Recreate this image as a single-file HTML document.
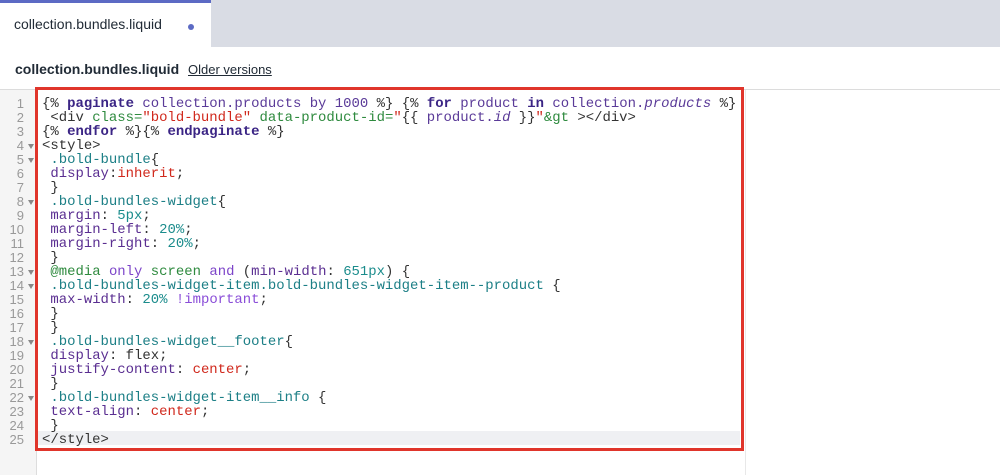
<!DOCTYPE html>
<html><head><meta charset="utf-8"><style>
body{margin:0;width:1000px;height:475px;overflow:hidden;background:#fff;font-family:"Liberation Sans",sans-serif;position:relative}
.tabbar{position:absolute;left:0;top:0;width:1000px;height:47px;background:#d9dce4}
.tab{position:absolute;left:0;top:0;width:211px;height:47px;background:#fff;border-top:3px solid #5c6ac4;box-sizing:border-box}
.tab span{position:absolute;left:14px;top:13px;font-size:14px;color:#212b36}
.dot{position:absolute;left:188px;top:21px;width:6px;height:6px;border-radius:50%;background:#5c6ac4}
.title{position:absolute;left:15px;top:61px;font-size:14px;font-weight:bold;color:#212b36}
.older{position:absolute;left:188px;top:62px;font-size:13px;color:#212b36;text-decoration:underline}
.hr{position:absolute;left:0;top:89px;width:1000px;height:1px;background:#dcdcdc}
.gutter{position:absolute;left:0;top:90px;width:36px;height:385px;background:#f5f5f5;border-right:1px solid #ddd}
.nums{position:absolute;left:0;top:97px;width:24px;text-align:right;font-family:"Liberation Sans",sans-serif;font-size:13px;line-height:14px;color:#999}
.arr{position:absolute;left:28px;width:0;height:0;border-left:3.5px solid transparent;border-right:3.5px solid transparent;border-top:5px solid #888}
.hl{position:absolute;left:38px;top:431px;width:702px;height:14px;background:#eff0f3}
.box{position:absolute;left:35px;top:87px;width:709px;height:364px;border:3px solid #e0352b;box-sizing:border-box}
.code{position:absolute;left:42px;top:97px;font-family:"Liberation Mono",monospace;font-size:13.95px;line-height:14px;color:#333;white-space:pre}
.k{color:#3b2585;font-weight:bold}.v{color:#5a3a98}.a{color:#2e8a3e}.s{color:#d0281c}.c{color:#1c7f86}.p{color:#5a2e91}.n{color:#1b8c8c}.i{color:#8a4dd8}.o{color:#7c44c9}.g{color:#2e8a3e}
.rl{position:absolute;left:745px;top:90px;width:1px;height:385px;background:#e8e8e8}
</style></head><body>
<div class="tabbar"><div class="tab"><span>collection.bundles.liquid</span><div class="dot"></div></div></div>
<div class="title">collection.bundles.liquid</div><div class="older">Older versions</div>
<div class="hr"></div>
<div class="gutter"></div>
<div class="nums">1<br>2<br>3<br>4<br>5<br>6<br>7<br>8<br>9<br>10<br>11<br>12<br>13<br>14<br>15<br>16<br>17<br>18<br>19<br>20<br>21<br>22<br>23<br>24<br>25</div>
<div class="arr" style="top:144px"></div><div class="arr" style="top:158px"></div><div class="arr" style="top:200px"></div><div class="arr" style="top:270px"></div><div class="arr" style="top:284px"></div><div class="arr" style="top:340px"></div><div class="arr" style="top:396px"></div>
<div class="hl"></div>
<div class="rl"></div>
<div class="code">{% <span class="k">paginate</span> <span class="v">collection.products</span> <span class="v">by</span> <span class="v">1000</span> %} {% <span class="k">for</span> <span class="v">product</span> <span class="k">in</span> <span class="v">collection.<i>products</i></span> %}
 &lt;div <span class="a">class=</span><span class="s">"bold-bundle"</span> <span class="a">data-product-id=</span><span class="s">"</span>{{ <span class="v">product.<i>id</i></span> }}<span class="s">"</span><span class="a">&amp;gt</span> &gt;&lt;/div&gt;
{% <span class="k">endfor</span> %}{% <span class="k">endpaginate</span> %}
&lt;style&gt;
 <span class="c">.bold-bundle</span>{
 <span class="p">display</span>:<span class="s">inherit</span>;
 }
 <span class="c">.bold-bundles-widget</span>{
 <span class="p">margin</span>: <span class="n">5px</span>;
 <span class="p">margin-left</span>: <span class="n">20%</span>;
 <span class="p">margin-right</span>: <span class="n">20%</span>;
 }
 <span class="g">@media</span> <span class="o">only</span> <span class="g">screen</span> <span class="o">and</span> (<span class="p">min-width</span>: <span class="n">651px</span>) {
 <span class="c">.bold-bundles-widget-item.bold-bundles-widget-item--product</span> {
 <span class="p">max-width</span>: <span class="n">20%</span> <span class="i">!important</span>;
 }
 }
 <span class="c">.bold-bundles-widget__footer</span>{
 <span class="p">display</span>: flex;
 <span class="p">justify-content</span>: <span class="s">center</span>;
 }
 <span class="c">.bold-bundles-widget-item__info</span> {
 <span class="p">text-align</span>: <span class="s">center</span>;
 }
&lt;/style&gt;</div>
<div class="box"></div>
</body></html>
